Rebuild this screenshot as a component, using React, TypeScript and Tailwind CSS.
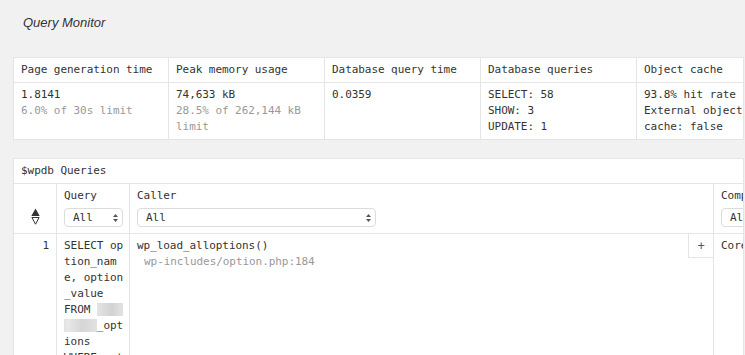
import React from "react";

const mono = {
  fontFamily: '"DejaVu Sans Mono", "Liberation Mono", monospace',
  letterSpacing: "-0.06px",
};

function SelectBox({ className = "" }: { className?: string }) {
  return (
    <div
      className={`flex items-center justify-between h-[19px] border border-[#dcdcdc] rounded-[4px] bg-white pl-[8px] pr-[4px] text-[11px] leading-[16px] text-[#333] whitespace-nowrap overflow-hidden ${className}`}
    >
      <span>All</span>
      <svg width="5" height="8" viewBox="0 0 5 8" className="shrink-0">
        <path d="M2.5 0 L5 3 L0 3 Z" fill="#555" />
        <path d="M0 5 L5 5 L2.5 8 Z" fill="#555" />
      </svg>
    </div>
  );
}

export default function App() {
  const base = "border border-[#e5e5e5] px-[7px] py-[4px] text-left font-normal overflow-hidden";
  const cell = `${base} align-top`;
  return (
    <div className="h-[355px] overflow-hidden bg-[#f1f1f1] text-[#333]">
      <h1
        className="italic text-[13px] leading-[16px] pl-[23px] pt-[15px] text-[#333] font-normal"
        style={{ fontFamily: '"Liberation Sans", Arial, sans-serif' }}
      >
        Query Monitor
      </h1>

      <table
        className="ml-[13px] mt-[26px] w-[730px] table-fixed border-collapse bg-white text-[11px] leading-[16px]"
        style={mono}
      >
        <colgroup>
          <col className="w-[155px]" />
          <col className="w-[156px]" />
          <col className="w-[156px]" />
          <col className="w-[156px]" />
          <col className="w-[107px]" />
        </colgroup>
        <thead>
          <tr>
            <th className={cell}>Page generation time</th>
            <th className={cell}>Peak memory usage</th>
            <th className={cell}>Database query time</th>
            <th className={cell}>Database queries</th>
            <th className={`${cell} whitespace-nowrap`}>Object cache</th>
          </tr>
        </thead>
        <tbody>
          <tr>
            <td className={cell}>
              1.8141
              <br />
              <span className="text-[#999]">6.0% of 30s limit</span>
            </td>
            <td className={cell}>
              74,633&nbsp;kB
              <br />
              <span className="text-[#999]">28.5% of 262,144&nbsp;kB limit</span>
            </td>
            <td className={cell}>0.0359</td>
            <td className={cell}>
              SELECT: 58
              <br />
              SHOW: 3
              <br />
              UPDATE: 1
            </td>
            <td className={`${cell} pr-0`}>
              <div className="w-[104px]">
                93.8% hit rate
                <br />
                External object cache: false
              </div>
            </td>
          </tr>
        </tbody>
      </table>

      <table
        className="ml-[13px] mt-[18px] w-[730px] table-fixed border-collapse bg-white text-[11px] leading-[16px]"
        style={mono}
      >
        <colgroup>
          <col className="w-[43px]" />
          <col className="w-[73px]" />
          <col className="w-[584px]" />
          <col className="w-[30px]" />
        </colgroup>
        <thead>
          <tr>
            <th colSpan={4} className={cell}>
              $wpdb Queries
            </th>
          </tr>
          <tr>
            <th className={`${base} align-bottom pb-[8px]`}>
              <div className="flex justify-center">
                <svg width="9" height="17" viewBox="0 0 9 17">
                  <path d="M4.5 0.5 L8.7 8 L0.3 8 Z" fill="#333" />
                  <path d="M0.9 9.5 L8.1 9.5 L4.5 16.2 Z" fill="none" stroke="#333" strokeWidth="1" />
                </svg>
              </div>
            </th>
            <th className={`${cell} pb-[6px]`}>
              <div>Query</div>
              <SelectBox className="mt-[4px] w-[59px]" />
            </th>
            <th className={`${cell} pb-[6px]`}>
              <div>Caller</div>
              <SelectBox className="mt-[4px] w-[239px]" />
            </th>
            <th className={`${cell} pb-[6px] pr-0 whitespace-nowrap`}>
              <div>Component</div>
              <SelectBox className="mt-[4px] w-[60px]" />
            </th>
          </tr>
        </thead>
        <tbody>
          <tr>
            <td className={`${cell} text-right`}>1</td>
            <td className={`${cell} pr-[5px] break-all`}>
              SELECT option_name, option_value
              <br />
              FROM{" "}
              <span className="text-transparent bg-[linear-gradient(90deg,#e4e4e4,#d2d2d2,#e8e8e8,#d6d6d6,#e2e2e2)]">
                xxxxxxxxx
              </span>
              _options
              <br />
              WHERE autoload = 'yes'
            </td>
            <td className={`${cell} h-[140px]`}>
              <button className="float-right -mr-[7px] -mt-[4px] w-[25px] h-[24px] border-l border-b border-[#e5e5e5] text-[#0073aa] text-[12px] leading-[22px] bg-white">
                +
              </button>
              <div>wp_load_alloptions()</div>
              <div className="pl-[7px] text-[#999]">wp-includes/option.php:184</div>
            </td>
            <td className={`${cell} pr-0 whitespace-nowrap`}>Core</td>
          </tr>
        </tbody>
      </table>
    </div>
  );
}
